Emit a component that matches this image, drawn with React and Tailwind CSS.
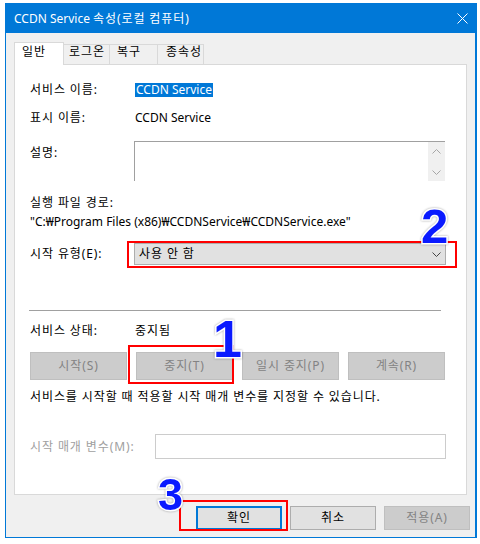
function Chevron({ up, className }) {
  return (
    <svg width="9" height="5" viewBox="0 0 9 5" className={className}>
      <path
        d={up ? "M0.5 4.5L4.5 0.5L8.5 4.5" : "M0.5 0.5L4.5 4.5L8.5 0.5"}
        fill="none"
        stroke="currentColor"
        strokeWidth="1"
      />
    </svg>
  );
}

function Btn({ children, disabled, def, className = "" }) {
  const base = "flex items-center justify-center leading-none tracking-[0.9px] ";
  if (disabled)
    return (
      <div className={base + "bg-[#cccccc] border border-[#bfbfbf] text-[#838383] " + className}>
        {children}
      </div>
    );
  if (def)
    return (
      <div className={base + "bg-[#e1e1e1] border-2 border-[#0078d7] text-black " + className}>
        {children}
      </div>
    );
  return (
    <div className={base + "bg-[#e1e1e1] border border-[#adadad] text-black " + className}>
      {children}
    </div>
  );
}

export default function App() {
  return (
    <div className="relative w-[480px] h-[544px] bg-white overflow-hidden font-['Noto_Sans','Noto_Sans_CJK_KR',sans-serif] text-[12px] text-black">
      {/* Window */}
      <div className="ml-[5px] mt-[3px] w-[472px] h-[535px] flex flex-col border-l border-r-2 border-b border-[#0078d7] bg-[#f0f0f0]">
        {/* Title bar */}
        <div className="h-[30px] shrink-0 bg-[#0078d7] flex items-center justify-between pl-2 pr-[7px] text-white">
          <span className="leading-none pt-px">
            CCDN Service <span className="tracking-[0.9px]">속성(로컬 컴퓨터)</span>
          </span>
          <svg width="11" height="11" viewBox="0 0 11 11">
            <path d="M0.5 0.5L10.5 10.5M10.5 0.5L0.5 10.5" stroke="white" strokeWidth="1" />
          </svg>
        </div>

        {/* Tabs */}
        <div className="flex items-start h-[31px] pl-2 pt-[9px] tracking-[0.9px]">
          <div className="relative z-10 w-[50px] h-[23px] bg-white border border-b-0 border-[#d9d9d9] pl-[7px] pt-px leading-[16px]">
            일반
          </div>
          <div className="mt-[2px] w-[46px] h-[20px] border-t border-r border-[#d9d9d9] pl-[5px] leading-[14px]">
            로그온
          </div>
          <div className="mt-[2px] w-[48px] h-[20px] border-t border-r border-[#d9d9d9] pl-[7px] leading-[14px]">
            복구
          </div>
          <div className="mt-[2px] w-[46px] h-[20px] border-t border-r border-[#d9d9d9] pl-[8px] leading-[14px]">
            종속성
          </div>
        </div>

        {/* Panel */}
        <div className="ml-2 w-[453px] h-[431px] shrink-0 border border-[#d9d9d9] bg-white pl-[15px] flex flex-col">
          <div className="mt-[15px] h-[20px] flex items-center">
            <div className="w-[105px] tracking-[0.9px]">서비스 이름:</div>
            <span className="bg-[#0078d7] text-white px-px leading-[14px]">CCDN Service</span>
          </div>
          <div className="mt-2 h-[20px] flex items-center">
            <div className="w-[105px] tracking-[0.9px]">표시 이름:</div>
            <span>CCDN Service</span>
          </div>
          <div className="mt-[13px] flex items-start">
            <div className="w-[104px] pt-[2px] leading-[20px] tracking-[0.9px]">설명:</div>
            <div className="w-[311px] h-[40px] border-t border-l border-[#a0a0a0] bg-white flex justify-end">
              <div className="w-[17px] h-full bg-[#f0f0f0] flex flex-col justify-between text-[#a6a6a6]">
                <div className="h-[17px] flex items-center justify-center pt-px">
                  <Chevron up />
                </div>
                <div className="h-[17px] flex items-center justify-center pb-px">
                  <Chevron />
                </div>
              </div>
            </div>
          </div>
          <div className="mt-[12px] h-[19px] leading-[19px] tracking-[0.9px]">실행 파일 경로:</div>
          <div className="h-[19px] leading-[19px]">"C:₩Program Files (x86)₩CCDNService₩CCDNService.exe"</div>
          <div className="mt-[12px] h-[22px] flex items-center">
            <div className="w-[104px] tracking-[0.9px]">시작 유형(E):</div>
            <div className="w-[312px] h-[22px] bg-[#e1e1e1] border border-[#adadad] flex items-center justify-between pl-[4px] pr-[4px]">
              <span className="leading-none tracking-[0.9px]">사용 안 함</span>
              <Chevron className="text-[#444444]" />
            </div>
          </div>
          <div className="mt-[45px] -ml-px w-[412px] h-px bg-[#a0a0a0]"></div>
          <div className="mt-[10px] h-[20px] flex items-center tracking-[0.9px]">
            <div className="w-[105px]">서비스 상태:</div>
            <span>중지됨</span>
          </div>
          <div className="mt-[11px] w-[415px] h-[28px] flex justify-between">
            <Btn disabled className="w-[97px] h-[28px]">시작(S)</Btn>
            <Btn disabled className="w-[97px] h-[28px]">중지(T)</Btn>
            <Btn disabled className="w-[97px] h-[28px]">일시 중지(P)</Btn>
            <Btn disabled className="w-[97px] h-[28px]">계속(R)</Btn>
          </div>
          <div className="mt-[7px] h-[20px] leading-[20px] tracking-[0.9px]">
            서비스를 시작할 때 적용할 시작 매개 변수를 지정할 수 있습니다.
          </div>
          <div className="mt-[27px] h-[25px] flex items-center">
            <div className="w-[125px] text-[#a0a0a0] tracking-[0.9px]">시작 매개 변수(M):</div>
            <div className="w-[291px] h-[25px] border border-[#cccccc] bg-white"></div>
          </div>
        </div>

        {/* Bottom buttons */}
        <div className="mt-[11px] flex justify-end gap-2 pr-[5px]">
          <Btn def className="w-[86px] h-[24px]">확인</Btn>
          <Btn className="w-[86px] h-[24px]">취소</Btn>
          <Btn disabled className="w-[86px] h-[24px]">적용(A)</Btn>
        </div>
      </div>

      {/* Annotations */}
      <div className="absolute left-[127px] top-[241px] w-[330px] h-[27px] border-2 border-[#ff0000]"></div>
      <div className="absolute left-[128px] top-[345px] w-[106px] h-[39px] border-2 border-[#ff0000]"></div>
      <div className="absolute left-[179px] top-[500px] w-[109px] h-[31px] border-2 border-[#ff0000]"></div>

      <div className="absolute left-[421px] top-[202px] text-[49px] leading-none font-bold font-['Liberation_Sans',sans-serif] text-[#0a1aff] [-webkit-text-stroke:3px_white] [paint-order:stroke_fill] [filter:drop-shadow(0_0_1px_rgba(0,0,0,0.35))]">
        2
      </div>
      <div className="absolute left-[213px] top-[313px] text-[52px] leading-none font-bold font-['Liberation_Sans',sans-serif] text-[#0a1aff] [-webkit-text-stroke:3px_white] [paint-order:stroke_fill] [filter:drop-shadow(0_0_1px_rgba(0,0,0,0.35))]">
        1
      </div>
      <div className="absolute left-[158px] top-[472px] text-[45px] leading-none font-bold font-['Liberation_Sans',sans-serif] text-[#0a1aff] [-webkit-text-stroke:3px_white] [paint-order:stroke_fill] [filter:drop-shadow(0_0_1px_rgba(0,0,0,0.35))]">
        3
      </div>
    </div>
  );
}
